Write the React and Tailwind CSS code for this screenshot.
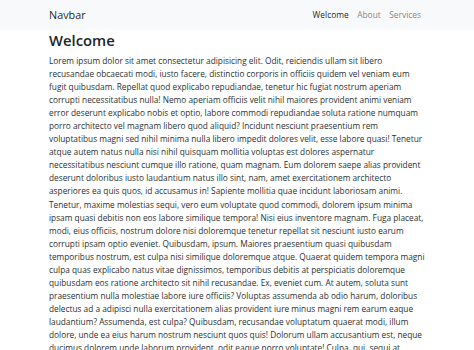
const text =
  "Lorem ipsum dolor sit amet consectetur adipisicing elit. Odit, reiciendis ullam sit libero recusandae obcaecati modi, iusto facere, distinctio corporis in officiis quidem vel veniam eum fugit quibusdam. Repellat quod explicabo repudiandae, tenetur hic fugiat nostrum aperiam corrupti necessitatibus nulla! Nemo aperiam officiis velit nihil maiores provident animi veniam error deserunt explicabo nobis et optio, labore commodi repudiandae soluta ratione numquam porro architecto vel magnam libero quod aliquid? Incidunt nesciunt praesentium rem voluptatibus magni sed nihil minima nulla libero impedit dolores velit, esse labore quasi! Tenetur atque autem natus nulla nisi nihil quisquam mollitia voluptas est dolores aspernatur necessitatibus nesciunt cumque illo ratione, quam magnam. Eum dolorem saepe alias provident deserunt doloribus iusto laudantium natus illo sint, nam, amet exercitationem architecto asperiores ea quis quos, id accusamus in! Sapiente mollitia quae incidunt laboriosam animi. Tenetur, maxime molestias sequi, vero eum voluptate quod commodi, dolorem ipsum minima ipsam quasi debitis non eos labore similique tempora! Nisi eius inventore magnam. Fuga placeat, modi, eius officiis, nostrum dolore nisi doloremque tenetur repellat sit nesciunt iusto earum corrupti ipsam optio eveniet. Quibusdam, ipsum. Maiores praesentium quasi quibusdam temporibus nostrum, est culpa nisi similique doloremque atque. Quaerat quidem tempora magni culpa quas explicabo natus vitae dignissimos, temporibus debitis at perspiciatis doloremque quibusdam eos ratione architecto sit nihil recusandae. Ex, eveniet cum. At autem, soluta sunt praesentium nulla molestiae labore iure officiis? Voluptas assumenda ab odio harum, doloribus delectus ad a adipisci nulla exercitationem alias provident iure minus magni rem earum eaque laudantium? Assumenda, est culpa? Quibusdam, recusandae voluptatum quaerat modi, illum dolore, unde ea eius harum nostrum nesciunt quos quis! Dolorum ullam accusantium est, neque ducimus dolorem unde laborum provident, odit eaque porro voluptate! Culpa, qui, sequi at voluptatibus quod explicabo nesciunt dolorum beatae minima."

export default function App() {
  return (
    <div className="min-h-screen bg-white font-['Open_Sans',sans-serif] text-[#212529]">
      <nav className="bg-[#f8f9fa]">
        <div className="mx-auto flex h-[30px] w-[376px] items-center justify-between">
          <a href="#" className="text-[10.8px] text-black/90">
            Navbar
          </a>
          <ul className="mr-[4px] flex gap-[8.5px] text-[8.4px]">
            <li>
              <a href="#" className="text-black/90">Welcome</a>
            </li>
            <li>
              <a href="#" className="text-black/50">About</a>
            </li>
            <li>
              <a href="#" className="text-black/50">Services</a>
            </li>
          </ul>
        </div>
      </nav>
      <main className="mx-auto w-[376px]">
        <h1 className="text-[14.8px] font-semibold leading-[21px]">Welcome</h1>
        <p className="mt-[3px] text-[8.3px] leading-[13.05px] text-[#2b2f33]">{text}</p>
      </main>
    </div>
  )
}
